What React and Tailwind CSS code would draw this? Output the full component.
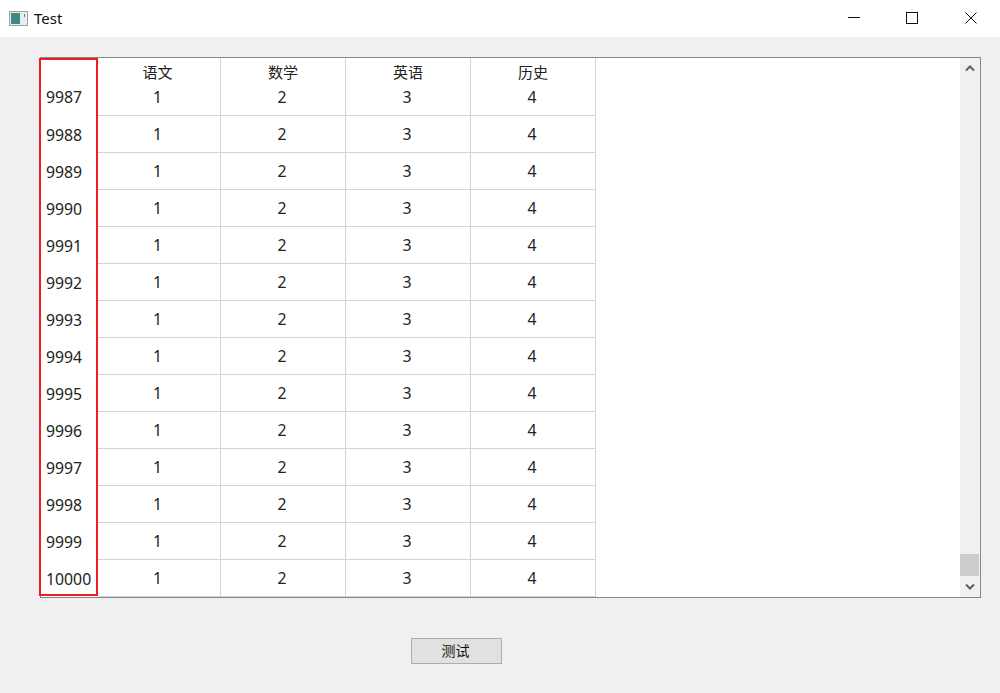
const rows = [9987, 9988, 9989, 9990, 9991, 9992, 9993, 9994, 9995, 9996, 9997, 9998, 9999, 10000];
const heads = ["语文", "数学", "英语", "历史"];
const font = "font-['Noto_Sans','Noto_Sans_CJK_SC',sans-serif]";

export default function App() {
  return (
    <div className={`flex h-[693px] w-[1000px] flex-col bg-[#f0f0f0] ${font}`}>
      <header className="flex h-[37px] items-center bg-white">
        <svg width="20" height="16" viewBox="0 0 20 16" className="ml-[9px]">
          <rect x="0.5" y="0.5" width="18" height="14" fill="#e8eef0" stroke="#9aa0a6" />
          <rect x="2" y="2" width="9" height="11" fill="#3f8a80" />
          <rect x="15" y="3" width="1" height="3" fill="#777" />
        </svg>
        <span className="ml-[5px] text-[15px] text-[#111]">Test</span>
        <div className="ml-auto flex h-full items-start pt-[12px]">
          <svg width="14" height="12" viewBox="0 0 14 12" className="mr-[45px]">
            <path d="M1 5.5h12" stroke="#111" strokeWidth="1" fill="none" />
          </svg>
          <svg width="12" height="12" viewBox="0 0 12 12" className="mr-[47px]">
            <rect x="0.5" y="0.5" width="11" height="11" stroke="#111" strokeWidth="1" fill="none" />
          </svg>
          <svg width="12" height="12" viewBox="0 0 12 12" className="mr-[23px]">
            <path d="M0.5 0.5l11 11M11.5 0.5l-11 11" stroke="#111" strokeWidth="1" fill="none" />
          </svg>
        </div>
      </header>

      <div className="relative mt-[20px] ml-[40px] flex h-[541px] w-[941px] border border-[#828790] bg-white">
        <div className="flex w-[57px] flex-col text-[15.8px] text-[#222]">
          <div className="h-[30px]" />
          {rows.map((n, i) => (
            <div key={n} className={`flex items-center pl-[5px] ${i === 0 ? "h-[28px] pb-[8px]" : "h-[37px] pt-[2px]"}`}>
              {n}
            </div>
          ))}
        </div>
        <div className="flex flex-col">
          <div className="flex h-[30px]">
            {heads.map((h, i) => (
              <div key={h} className={`flex items-center justify-center border-r border-[#d4d4d4] pb-[2px] text-[15px] text-[#222] ${i === 0 ? "w-[123px] pr-[3px]" : "w-[125px]"}`}>
                {h}
              </div>
            ))}
          </div>
          {rows.map((n, i) => (
            <div key={n} className="flex">
              {[1, 2, 3, 4].map((v, j) => (
                <div
                  key={v}
                  className={`flex items-center justify-center border-r border-b border-[#d4d4d4] text-[15.8px] text-[#222] ${j === 0 ? "w-[123px] pr-[3px]" : "w-[125px] pr-[2px]"} ${i === 0 ? "h-[28px] pb-[8px]" : "h-[37px] pt-[2px]"}`}
                >
                  {v}
                </div>
              ))}
            </div>
          ))}
        </div>
        <div className="ml-auto flex w-[20px] flex-col bg-[#f0f0f0]">
          <div className="flex h-[21px] items-center justify-center">
            <svg width="10" height="7" viewBox="0 0 10 7">
              <path d="M1 5.5l4-4 4 4" stroke="#606060" strokeWidth="2" fill="none" />
            </svg>
          </div>
          <div className="flex-1" />
          <div className="mr-px h-[22px] bg-[#cdcdcd]" />
          <div className="flex h-[21px] items-center justify-center">
            <svg width="10" height="7" viewBox="0 0 10 7">
              <path d="M1 1.5l4 4 4-4" stroke="#606060" strokeWidth="2" fill="none" />
            </svg>
          </div>
        </div>
        <div className="absolute top-0 left-[-2px] h-[538px] w-[59px] border-2 border-[#f01c24]" />
      </div>

      <div className="mt-[40px] ml-[411px]">
        <button className="flex h-[26px] w-[91px] items-center justify-center border border-[#adadad] bg-[#e1e1e1] pr-[2px] pb-[2px] text-[14px] text-[#111]">
          测试
        </button>
      </div>
    </div>
  );
}
